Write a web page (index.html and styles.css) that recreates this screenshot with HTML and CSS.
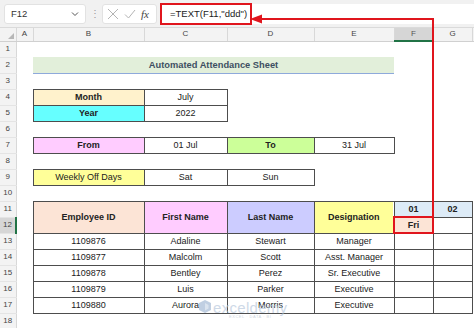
FILE: index.html
```html
<!DOCTYPE html>
<html lang="en">
<head>
  <meta charset="UTF-8" />
  <title>Automated Attendance Sheet</title>
  <link rel="stylesheet" href="styles.css">
</head>
<body>

  <!-- formula bar -->
  <div class="topbar">
    <div class="namebox">
      <span>F12</span>
      <svg class="chev" width="8" height="6" viewBox="0 0 8 6"><path d="M1 1.5 L4 4.5 L7 1.5" fill="none" stroke="#555" stroke-width="1"/></svg>
    </div>
    <div class="dots">⋮</div>
    <div class="fxbox">
      <svg width="12" height="12" viewBox="0 0 12 12"><path d="M1 1 L11 11 M11 1 L1 11" stroke="#b4b4b4" stroke-width="1"/></svg>
      <svg width="12" height="12" viewBox="0 0 12 12"><path d="M1 6.5 L4.5 10 L11 2" fill="none" stroke="#b4b4b4" stroke-width="1"/></svg>
      <span class="fx">fx</span>
    </div>
    <div class="formula">
      <span class="formula-text">=TEXT(F11,"ddd")</span>
    </div>
  </div>

  <!-- sheet -->
  <table class="sheet">
    <colgroup>
      <col style="width:16px"><col style="width:17px"><col style="width:111px"><col style="width:83px">
      <col style="width:87px"><col style="width:80px"><col style="width:39px"><col style="width:39px"><col style="width:2px">
    </colgroup>
    <tr class="colhdr">
      <th class="corner"><span class="tri"></span></th><th>A</th><th>B</th><th>C</th><th>D</th><th>E</th><th class="sel">F</th><th>G</th><th></th>
    </tr>
    <tr><th class="rh">1</th><td></td><td></td><td></td><td></td><td></td><td></td><td></td><td></td></tr>
    <tr><th class="rh">2</th><td></td><td colspan="4" class="title">Automated Attendance Sheet</td><td></td><td></td><td></td></tr>
    <tr><th class="rh">3</th><td></td><td></td><td></td><td></td><td></td><td></td><td></td><td></td></tr>
    <tr><th class="rh">4</th><td></td><td class="b bold month">Month</td><td class="b">July</td><td></td><td></td><td></td><td></td><td></td></tr>
    <tr><th class="rh">5</th><td></td><td class="b bold year">Year</td><td class="b">2022</td><td></td><td></td><td></td><td></td><td></td></tr>
    <tr><th class="rh">6</th><td></td><td></td><td></td><td></td><td></td><td></td><td></td><td></td></tr>
    <tr><th class="rh">7</th><td></td><td class="b bold pink">From</td><td class="b">01 Jul</td><td class="b bold lime">To</td><td class="b">31 Jul</td><td></td><td></td><td></td></tr>
    <tr><th class="rh">8</th><td></td><td></td><td></td><td></td><td></td><td></td><td></td><td></td></tr>
    <tr><th class="rh">9</th><td></td><td class="b yellow">Weekly Off Days</td><td class="b">Sat</td><td class="b">Sun</td><td></td><td></td><td></td><td></td></tr>
    <tr><th class="rh">10</th><td></td><td></td><td></td><td></td><td></td><td></td><td></td><td></td></tr>
    <tr>
      <th class="rh">11</th><td></td>
      <td rowspan="2" class="b bold peach">Employee ID</td>
      <td rowspan="2" class="b bold pink">First Name</td>
      <td rowspan="2" class="b bold lavender">Last Name</td>
      <td rowspan="2" class="b bold yellow">Designation</td>
      <td class="b bold blue">01</td><td class="b bold blue">02</td><td></td>
    </tr>
    <tr><th class="rh rh-sel">12</th><td></td><td class="b bold peach fri">Fri</td><td class="b"></td><td></td></tr>
    <tr><th class="rh">13</th><td></td><td class="b">1109876</td><td class="b">Adaline</td><td class="b">Stewart</td><td class="b">Manager</td><td class="b"></td><td class="b"></td><td></td></tr>
    <tr><th class="rh">14</th><td></td><td class="b">1109877</td><td class="b">Malcolm</td><td class="b">Scott</td><td class="b">Asst. Manager</td><td class="b"></td><td class="b"></td><td></td></tr>
    <tr><th class="rh">15</th><td></td><td class="b">1109878</td><td class="b">Bentley</td><td class="b">Perez</td><td class="b">Sr. Executive</td><td class="b"></td><td class="b"></td><td></td></tr>
    <tr><th class="rh">16</th><td></td><td class="b">1109879</td><td class="b">Luis</td><td class="b">Parker</td><td class="b">Executive</td><td class="b"></td><td class="b"></td><td></td></tr>
    <tr><th class="rh">17</th><td></td><td class="b">1109880</td><td class="b">Aurora</td><td class="b">Morris</td><td class="b">Executive</td><td class="b"></td><td class="b"></td><td></td></tr>
    <tr><th class="rh">18</th><td></td><td></td><td></td><td></td><td></td><td></td><td></td><td></td></tr>
  </table>

  <!-- red arrow from formula to cell -->
  <svg class="arrow" width="474" height="328" viewBox="0 0 474 328">
    <path d="M260 19 H433 V216" fill="none" stroke="#e0151d" stroke-width="2"/>
    <polygon points="250,19 262,14.5 262,23.5" fill="#e0151d"/>
  </svg>

  <!-- watermark -->
  <div class="watermark">
    <svg width="12" height="13" viewBox="0 0 12 13"><polygon points="6,0 12,3 12,10 6,13 0,10 0,3" fill="#9fb6d3"/><polygon points="6,3 9.5,5 9.5,8.5 6,10.5" fill="#c9d7e8"/></svg>
    <div class="wm-text">
      <span class="wm-name">exceldemy</span>
      <span class="wm-sub">EXCEL · DATA · BI</span>
    </div>
  </div>

</body>
</html>
```

FILE: styles.css
```css
body {
  margin: 0;
  width: 474px;
  height: 328px;
  overflow: hidden;
  position: relative;
  background: white;
  font-family: "Liberation Sans", Arial, sans-serif;
}

.topbar {
  height: 28px;
  display: flex;
  align-items: center;
  gap: 4px;
  padding: 0 0 0 4px;
  background: #f1f1f1;
  border-bottom: 1px solid #dadada;
  box-sizing: border-box;
}

.namebox {
  width: 82px;
  height: 20px;
  background: white;
  border: 1px solid #e2e2e2;
  border-radius: 3px;
  display: flex;
  align-items: center;
  justify-content: space-between;
  padding: 0 6px 0 6px;
  box-sizing: border-box;
  font-size: 9.5px;
  color: #333;
}

.dots {
  width: 8px;
  text-align: center;
  color: #999;
  font-size: 10px;
}

.fxbox {
  width: 55px;
  height: 20px;
  background: white;
  border: 1px solid #e2e2e2;
  border-radius: 3px;
  display: flex;
  align-items: center;
  gap: 5px;
  padding: 0 4px;
  box-sizing: border-box;
}

.fx {
  font-family: "Liberation Serif", serif;
  font-style: italic;
  font-size: 11px;
  color: #444;
}

.formula {
  flex: 1;
  height: 20px;
  background: white;
  display: flex;
  align-items: center;
}

.formula-text {
  margin-left: -1px;
  width: 92px;
  height: 22px;
  border: 2px solid #e0151d;
  box-sizing: border-box;
  display: flex;
  align-items: center;
  padding-left: 8px;
  font-size: 9.5px;
  color: #222;
  white-space: nowrap;
}

.sheet {
  border-collapse: collapse;
  table-layout: fixed;
  width: 474px;
  font-size: 9px;
  color: #222;
}

.sheet tr {
  height: 16px;
}

.sheet td,
.sheet th {
  box-sizing: border-box;
  height: 16px;
  padding: 0;
  line-height: 12px;
}

.sheet td {
  text-align: center;
  white-space: nowrap;
  overflow: hidden;
}

.sheet .colhdr {
  height: 13px;
}

.colhdr th {
  height: 13px;
  background: #f3f3f3;
  border-right: 1px solid #d8d8d8;
  border-bottom: 1px solid #d0d0d0;
  font-weight: normal;
  font-size: 8px;
  line-height: 10px;
  color: #444;
}

.colhdr th.sel {
  background: #d6d6d6;
  border-bottom: 2px solid #217346;
  color: #555;
}

.corner {
  position: relative;
}

.tri {
  position: absolute;
  right: 2px;
  bottom: 2px;
  border-left: 6px solid transparent;
  border-bottom: 6px solid #b7b7b7;
}

.rh {
  background: #f3f3f3;
  border-right: 1px solid #d8d8d8;
  border-bottom: 1px solid #e4e4e4;
  font-weight: normal;
  font-size: 8px;
  color: #444;
}

.rh-sel {
  background: #d6d6d6;
  border-right: 2px solid #217346;
}

.b {
  border: 1px solid #4d4d4d;
}

.bold {
  font-weight: bold;
}

.title {
  background: #e2efda;
  border-bottom: 1px solid #8ea9db;
  font-weight: bold;
  font-size: 9.3px;
  color: #3e4f62;
}

.month { background: #fff2cc; }
.year { background: #66ffff; }
.pink { background: #ffccff; }
.lime { background: #ccff99; }
.yellow { background: #ffff99; }
.peach { background: #fce4d6; }
.lavender { background: #ccccff; }
.blue { background: #ddebf7; }

.sheet td.fri {
  border: 2px solid #e0151d;
}

.arrow {
  position: absolute;
  top: 0;
  left: 0;
  pointer-events: none;
}

.watermark {
  position: absolute;
  left: 199px;
  top: 300px;
  display: flex;
  align-items: flex-start;
  gap: 2px;
  opacity: 0.65;
  pointer-events: none;
}

.wm-text {
  display: flex;
  flex-direction: column;
  align-items: center;
  line-height: 1;
}

.wm-name {
  font-size: 15px;
  letter-spacing: 0.3px;
  color: #b5c6db;
}

.wm-sub {
  font-size: 4px;
  letter-spacing: 0.5px;
  color: #b8c3cf;
}
```
